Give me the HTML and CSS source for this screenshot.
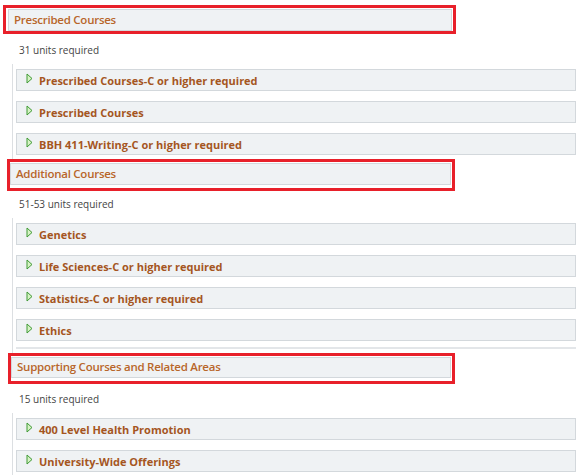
FILE: index.html
```html
<!DOCTYPE html>
<html>
<head>
<meta charset="utf-8">
<link rel="stylesheet" href="styles.css">
</head>
<body>
<div class="page">
  <section class="sec sec1">
    <div class="mark"><div class="hdr">Prescribed Courses</div></div>
    <div class="units">31 units required</div>
    <div class="items">
      <div class="item"><svg class="tri" width="7" height="11" viewBox="0 0 7 11"><polygon points="1,1 6,5.5 1,10"/></svg><span>Prescribed Courses-C or higher required</span></div>
      <div class="item"><svg class="tri" width="7" height="11" viewBox="0 0 7 11"><polygon points="1,1 6,5.5 1,10"/></svg><span>Prescribed Courses</span></div>
      <div class="item"><svg class="tri" width="7" height="11" viewBox="0 0 7 11"><polygon points="1,1 6,5.5 1,10"/></svg><span>BBH 411-Writing-C or higher required</span></div>
    </div>
  </section>
  <section class="sec sec2">
    <div class="mark"><div class="hdr">Additional Courses</div></div>
    <div class="units">51-53 units required</div>
    <div class="items">
      <div class="item"><svg class="tri" width="7" height="11" viewBox="0 0 7 11"><polygon points="1,1 6,5.5 1,10"/></svg><span>Genetics</span></div>
      <div class="item"><svg class="tri" width="7" height="11" viewBox="0 0 7 11"><polygon points="1,1 6,5.5 1,10"/></svg><span>Life Sciences-C or higher required</span></div>
      <div class="item"><svg class="tri" width="7" height="11" viewBox="0 0 7 11"><polygon points="1,1 6,5.5 1,10"/></svg><span>Statistics-C or higher required</span></div>
      <div class="item"><svg class="tri" width="7" height="11" viewBox="0 0 7 11"><polygon points="1,1 6,5.5 1,10"/></svg><span>Ethics</span></div>
      <div class="rule"></div>
    </div>
  </section>
  <section class="sec sec3">
    <div class="mark"><div class="hdr">Supporting Courses and Related Areas</div></div>
    <div class="units">15 units required</div>
    <div class="items">
      <div class="item"><svg class="tri" width="7" height="11" viewBox="0 0 7 11"><polygon points="1,1 6,5.5 1,10"/></svg><span>400 Level Health Promotion</span></div>
      <div class="item"><svg class="tri" width="7" height="11" viewBox="0 0 7 11"><polygon points="1,1 6,5.5 1,10"/></svg><span>University-Wide Offerings</span></div>
    </div>
  </section>
</div>
</body>
</html>
```
FILE: styles.css
```css
* { box-sizing: border-box; }
html, body { margin: 0; padding: 0; background: #fff; }
body { font-family: "Open Sans", "Noto Sans", sans-serif; }
.page { width: 580px; padding-top: 5px; }

.mark {
  border: 3px solid #e8202a;
  display: flex;
  align-items: stretch;
}
.hdr {
  flex: 1;
  background: #eff2f4;
  border: 1px solid #d3d8dc;
  color: #b8662a;
  font-weight: 600;
  font-size: 11.5px;
  letter-spacing: -0.25px;
  padding-left: 5px;
  padding-bottom: 2px;
  display: flex;
  align-items: center;
}
.sec1 .mark { margin-left: 3px; width: 453px; height: 29px; padding: 1px 1px 0 2px; }
.sec2 .mark { margin-left: 7px; width: 448px; height: 32px; padding: 1px 1px 3px 0; }
.sec3 .mark { margin-left: 8px; width: 447px; height: 31px; padding: 1px 1px 3px 0; }

.units {
  font-size: 10px;
  color: #444;
  line-height: 14px;
  padding-left: 19px;
}
.sec1 .units { margin-top: 9px; }
.sec2 .units { margin-top: 6px; }
.sec3 .units { margin-top: 8px; }

.items {
  margin-left: 12px;
  width: 564px;
  border-left: 1px solid #dcdfe2;
  padding: 5px 0 4px 3px;
  display: flex;
  flex-direction: column;
  gap: 10px;
}
.sec1 .items { margin-top: 7px; }
.sec2 .items { margin-top: 7px; padding-bottom: 4px; }
.sec3 .items { margin-top: 7px; }

.item {
  height: 22px;
  background: #eff2f4;
  border: 1px solid #d3d8dc;
  display: flex;
  align-items: center;
  padding-left: 9px;
  color: #a5561f;
  font-weight: 700;
  font-size: 11px;
}
.item span { margin-left: 6px; }
.tri { display: block; margin-top: -3px; }
.tri polygon { fill: #d6f2c4; stroke: #3f9a34; stroke-width: 1; }

.rule {
  height: 0;
  border-top: 2px solid #e3e6e9;
  margin-top: -4px;
}
```
